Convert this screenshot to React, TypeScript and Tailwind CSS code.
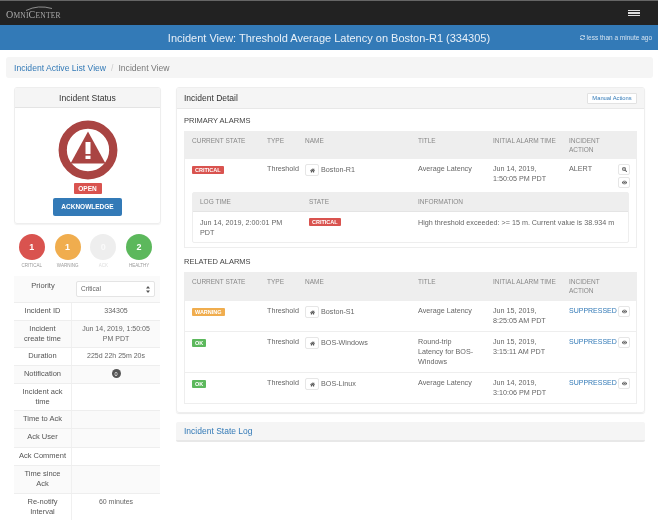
import { FaEye, FaHome, FaSearchPlus, FaSyncAlt } from "react-icons/fa";

const cols = "grid grid-cols-[75px_38px_113px_75px_76px_76px]";
const head = "text-[6.5px] leading-[9px] text-[#888] pl-[7px] pt-[4px]";

const Badge = ({ text, color }: { text: string; color: string }) => (
  <span className={`inline-block h-[8px] rounded-[1px] px-[3px] text-[5.5px] font-bold leading-[8px] text-white ${color}`}>{text}</span>
);

const IconBtn = ({ children }: { children: React.ReactNode }) => (
  <span className="flex h-[11px] w-[12px] shrink-0 items-center justify-center rounded-[2px] border border-[#e6e6e6] bg-white text-[5px] text-[#555]">
    {children}
  </span>
);

const TableHead = () => (
  <div className={`${cols} h-[27px] bg-[#eee]`}>
    <div className={head}>CURRENT STATE</div>
    <div className={head}>TYPE</div>
    <div className={head}>NAME</div>
    <div className={head}>TITLE</div>
    <div className={head}>INITIAL ALARM TIME</div>
    <div className={head}>
      INCIDENT
      <br />
      ACTION
    </div>
  </div>
);

const NameCell = ({ name }: { name: string }) => (
  <div className="flex items-start gap-[2px] pl-[7px] pt-[5px]">
    <span className="flex h-[12px] w-[14px] items-center justify-center rounded-[2px] border border-[#e6e6e6] text-[5px] text-[#555]">
      <FaHome />
    </span>
    <span className="pt-[1px]">{name}</span>
  </div>
);

const relatedRows = [
  { badge: "WARNING", color: "bg-[#f0ad4e]", name: "Boston-S1", title: "Average Latency", time: ["Jun 15, 2019,", "8:25:05 AM PDT"], h: "h-[31px]" },
  { badge: "OK", color: "bg-[#5cb85c]", name: "BOS-Windows", title: "Round-trip Latency for BOS-Windows", time: ["Jun 15, 2019,", "3:15:11 AM PDT"], h: "h-[41px]" },
  { badge: "OK", color: "bg-[#5cb85c]", name: "BOS-Linux", title: "Average Latency", time: ["Jun 14, 2019,", "3:10:06 PM PDT"], h: "h-[31px]" },
];

const circles = [
  { n: "1", label: "CRITICAL", bg: "bg-[#d9534f]", fg: "text-white", lab: "text-[#999]" },
  { n: "1", label: "WARNING", bg: "bg-[#f0ad4e]", fg: "text-white", lab: "text-[#999]" },
  { n: "0", label: "ACK", bg: "bg-[#eeeeee]", fg: "text-[#fafafa]", lab: "text-[#ddd]" },
  { n: "2", label: "HEALTHY", bg: "bg-[#5cb85c]", fg: "text-white", lab: "text-[#999]" },
];

const stats: { label: React.ReactNode; value?: React.ReactNode; h: string; stripe?: boolean }[] = [
  { label: "Incident ID", value: "334305", h: "h-[18px]" },
  { label: <>Incident<br />create time</>, value: <>Jun 14, 2019, 1:50:05<br />PM PDT</>, h: "h-[27px]", stripe: true },
  { label: "Duration", value: "225d 22h 25m 20s", h: "h-[18px]" },
  {
    label: "Notification",
    value: <span className="mx-auto flex h-[9px] w-[9px] items-center justify-center rounded-full bg-[#555] text-[5.5px] text-white">0</span>,
    h: "h-[18px]",
    stripe: true,
  },
  { label: <>Incident ack<br />time</>, h: "h-[27px]" },
  { label: "Time to Ack", h: "h-[18px]", stripe: true },
  { label: "Ack User", h: "h-[19px]", stripe: true },
  { label: "Ack Comment", h: "h-[18px]" },
  { label: <>Time since<br />Ack</>, h: "h-[28px]", stripe: true },
  { label: <>Re-notify<br />Interval</>, value: "60 minutes", h: "h-[27px]" },
];

export default function App() {
  return (
    <div className="h-[522px] w-[658px] overflow-hidden bg-white font-['Liberation_Sans',sans-serif] text-[7.2px] leading-[10px] text-[#666] blur-[0.5px]">
      <div className="flex h-[25px] items-center justify-between border-t border-[#666] bg-[#222] pl-[6px] pr-[18px]">
        <div className="flex flex-col">
          <svg width="56" height="6" viewBox="0 0 56 6" className="-mb-[1px]">
            <path d="M20 5.5 Q32 -0.5 46 3.5" fill="none" stroke="#aaa" strokeWidth="0.8" />
          </svg>
          <span className="font-['Liberation_Serif',serif] text-[10px] leading-[10px] tracking-[0.2px] text-[#aaa]">
            O<span className="text-[7.5px]">MNI</span>C<span className="text-[7.5px]">ENTER</span>
          </span>
        </div>
        <div className="flex w-[12px] flex-col gap-[1px]">
          <span className="h-[1.5px] bg-[#ddd]" />
          <span className="h-[1.5px] bg-[#ddd]" />
          <span className="h-[1.5px] bg-[#ddd]" />
        </div>
      </div>

      <div className="grid h-[25px] grid-cols-[1fr_auto_1fr] items-center bg-[#337ab7] text-white">
        <div />
        <div className="text-[11px] font-normal text-[#e8f0f8]">Incident View: Threshold Average Latency on Boston-R1 (334305)</div>
        <div className="flex items-center justify-end gap-[2px] pr-[6px] text-[6.5px] text-[#d5e4f1]">
          <FaSyncAlt className="text-[5px]" />
          <span>less than a minute ago</span>
        </div>
      </div>

      <div className="mx-[6px] mt-[7px] flex h-[21px] w-[647px] items-center gap-[5px] rounded-[3px] bg-[#f5f5f5] px-[8px] text-[8.6px]">
        <span className="text-[#337ab7]">Incident Active List View</span>
        <span className="text-[#ccc]">/</span>
        <span className="text-[#777]">Incident View</span>
      </div>

      <div className="mt-[9px] flex items-start gap-[15px] pl-[14px]">
        <div className="w-[147px] shrink-0">
          <div className="h-[137px] overflow-hidden rounded-[3px] border border-[#eee] shadow-[0_1px_1px_rgba(0,0,0,0.05)]">
            <div className="flex h-[20px] items-center justify-center border-b border-[#e4e4e4] bg-[#f5f5f5] text-[8.6px] text-[#333]">Incident Status</div>
            <div className="flex flex-col items-center pt-[12px]">
              <svg width="60" height="60" viewBox="0 0 60 60">
                <circle cx="30" cy="30" r="25.3" fill="none" stroke="#a94442" strokeWidth="8.3" />
                <path d="M30 11.5 L47.5 43.5 H12.5 Z" fill="#a94442" />
                <rect x="27.5" y="22" width="5" height="12" fill="#fff" />
                <rect x="27.5" y="35.7" width="5" height="3.3" fill="#fff" />
              </svg>
              <span className="mt-[3px] flex h-[11px] w-[28px] items-center justify-center rounded-[1px] bg-[#d9534f] text-[6.5px] font-bold text-white">OPEN</span>
              <span className="mt-[4px] flex h-[18px] w-[69px] items-center justify-center rounded-[2px] bg-[#337ab7] text-[6.5px] font-bold text-white">ACKNOWLEDGE</span>
            </div>
          </div>

          <div className="mt-[10px] grid w-[143px] grid-cols-4">
            {circles.map((c) => (
              <div key={c.label} className="flex flex-col items-center">
                <div className={`flex h-[26px] w-[26px] items-center justify-center rounded-full text-[9px] font-bold ${c.bg} ${c.fg}`}>{c.n}</div>
                <div className={`mt-[2px] text-[4.5px] leading-[8px] ${c.lab}`}>{c.label}</div>
              </div>
            ))}
          </div>

          <div className="mt-[6px] w-[146px] text-[7.5px]">
            <div className="grid h-[26px] grid-cols-[58px_88px] bg-[#fafafa] text-center">
              <div className="pt-[5px] text-[#555]">Priority</div>
              <div className="px-[4px] pt-[5px]">
                <div className="flex h-[16px] w-[79px] items-center justify-between rounded-[2px] border border-[#e4e4e4] bg-white px-[4px] text-[6.5px] text-[#666]">
                  <span>Critical</span>
                  <svg width="4" height="7" viewBox="0 0 4 7">
                    <path d="M2 0 L4 2.6 H0 Z M2 7 L4 4.4 H0 Z" fill="#555" />
                  </svg>
                </div>
              </div>
            </div>
            {stats.map((s, i) => (
              <div key={i} className={`grid grid-cols-[58px_88px] border-t border-[#eee] text-center ${s.h} ${s.stripe ? "bg-[#fafafa]" : "bg-white"}`}>
                <div className="border-r border-[#f0f0f0] pt-[3px] text-[#555]">{s.label}</div>
                <div className="pt-[3px] text-[7px] text-[#666]">{s.value}</div>
              </div>
            ))}
          </div>
        </div>

        <div className="w-[469px] shrink-0">
          <div className="h-[326px] overflow-hidden rounded-[3px] border border-[#eee] shadow-[0_1px_1px_rgba(0,0,0,0.08)]">
            <div className="flex h-[21px] items-center justify-between border-b border-[#e8e8e8] bg-[#f5f5f5] px-[7px] text-[8.5px] text-[#333]">
              <span>Incident Detail</span>
              <span className="flex h-[11px] w-[50px] items-center justify-center rounded-[1px] border border-[#e2e2e2] bg-white text-[5.8px] text-[#337ab7]">Manual Actions</span>
            </div>

            <div className="px-[7px]">
              <div className="pt-[7px] text-[7.5px] leading-[10px] text-[#444]">PRIMARY ALARMS</div>
              <div className="mt-[5px] h-[117px] border border-[#eee]">
                <TableHead />
                <div className={`${cols} h-[33px]`}>
                  <div className="pl-[7px] pt-[7px] leading-[8px]">
                    <Badge text="CRITICAL" color="bg-[#d9534f]" />
                  </div>
                  <div className="pl-[7px] pt-[5px]">Threshold</div>
                  <NameCell name="Boston-R1" />
                  <div className="pl-[7px] pt-[5px]">Average Latency</div>
                  <div className="pl-[7px] pt-[5px]">
                    Jun 14, 2019,
                    <br />
                    1:50:05 PM PDT
                  </div>
                  <div className="flex justify-between pl-[7px] pr-[8px] pt-[5px]">
                    <span>ALERT</span>
                    <div className="flex flex-col gap-[2px]">
                      <IconBtn>
                        <FaSearchPlus />
                      </IconBtn>
                      <IconBtn>
                        <FaEye />
                      </IconBtn>
                    </div>
                  </div>
                </div>
                <div className="mx-[7px] h-[51px] rounded-[2px] border border-[#eee]">
                  <div className="grid h-[19px] grid-cols-[109px_109px_1fr] items-center border-b border-[#e4e4e4] bg-[#eee] pl-[7px] text-[6.5px] text-[#888]">
                    <span>LOG TIME</span>
                    <span>STATE</span>
                    <span>INFORMATION</span>
                  </div>
                  <div className="grid grid-cols-[109px_109px_1fr] pl-[7px] pt-[6px]">
                    <div className="w-[90px]">Jun 14, 2019, 2:00:01 PM PDT</div>
                    <div className="leading-[8px]">
                      <Badge text="CRITICAL" color="bg-[#d9534f]" />
                    </div>
                    <div>{"High threshold exceeded: >= 15 m. Current value is 38.934 m"}</div>
                  </div>
                </div>
              </div>

              <div className="pt-[9px] text-[7.5px] leading-[10px] text-[#444]">RELATED ALARMS</div>
              <div className="mt-[5px] border border-[#eee]">
                <TableHead />
                {relatedRows.map((r) => (
                  <div key={r.name} className={`${cols} border-t border-[#eee] ${r.h}`}>
                    <div className="pl-[7px] pt-[7px] leading-[8px]">
                      <Badge text={r.badge} color={r.color} />
                    </div>
                    <div className="pl-[7px] pt-[5px]">Threshold</div>
                    <NameCell name={r.name} />
                    <div className="pl-[7px] pr-[8px] pt-[5px]">{r.title}</div>
                    <div className="pl-[7px] pt-[5px]">
                      {r.time[0]}
                      <br />
                      {r.time[1]}
                    </div>
                    <div className="flex items-start pl-[7px] pr-[8px] pt-[5px]">
                      <span className="min-w-0 flex-1 text-[7px] text-[#337ab7]">SUPPRESSED</span>
                      <IconBtn>
                        <FaEye />
                      </IconBtn>
                    </div>
                  </div>
                ))}
              </div>
            </div>
          </div>

          <div className="mt-[9px] flex h-[20px] items-center rounded-[2px] border-b-2 border-[#e8e8e8] bg-[#f5f5f5] px-[8px] text-[8.5px] text-[#337ab7]">Incident State Log</div>
        </div>
      </div>
    </div>
  );
}
